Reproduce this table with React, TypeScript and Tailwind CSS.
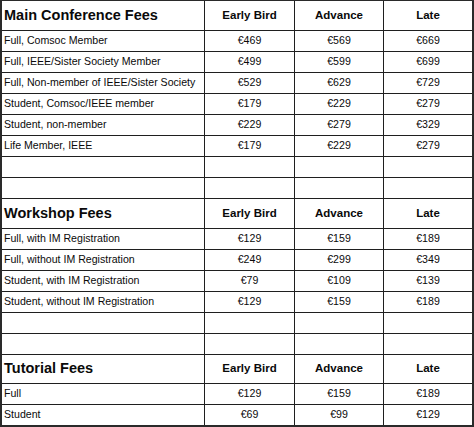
import React from "react";

type Row = [string, string, string, string];

interface Section {
  title: string;
  rows: Row[];
  blanks: number;
  headH: string;
}

const SECTIONS: Section[] = [
  {
    title: "Main Conference Fees",
    headH: "h-[30px]",
    blanks: 2,
    rows: [
      ["Full, Comsoc Member", "€469", "€569", "€669"],
      ["Full, IEEE/Sister Society Member", "€499", "€599", "€699"],
      ["Full, Non-member of IEEE/Sister Society", "€529", "€629", "€729"],
      ["Student, Comsoc/IEEE member", "€179", "€229", "€279"],
      ["Student, non-member", "€229", "€279", "€329"],
      ["Life Member, IEEE", "€179", "€229", "€279"],
    ],
  },
  {
    title: "Workshop Fees",
    headH: "h-[30px]",
    blanks: 2,
    rows: [
      ["Full, with IM Registration", "€129", "€159", "€189"],
      ["Full, without IM Registration", "€249", "€299", "€349"],
      ["Student, with IM Registration", "€79", "€109", "€139"],
      ["Student, without IM Registration", "€129", "€159", "€189"],
    ],
  },
  {
    title: "Tutorial Fees",
    headH: "h-[29px]",
    blanks: 0,
    rows: [
      ["Full", "€129", "€159", "€189"],
      ["Student", "€69", "€99", "€129"],
    ],
  },
];

const COLS = "grid grid-cols-[203px_90px_89px_88px]";
const CELL = "flex items-center border-[#1f1f1f]";

export default function App() {
  return (
    <div
      className="w-[474px] h-[427px] bg-white border-l-2 border-r-2 border-t border-b-2 border-[#2a2a2a] text-[#0a0a0a] overflow-hidden"
      style={{ fontFamily: '"Liberation Sans", Arial, sans-serif' }}
    >
      {SECTIONS.map((sec, si) => {
        const lastSection = si === SECTIONS.length - 1;
        const total = sec.rows.length + sec.blanks;
        return (
          <div key={sec.title}>
            {/* section heading row */}
            <div className={`${COLS} ${sec.headH}`}>
              <div className={`${CELL} border-r border-b pl-[2px] text-[14.5px] font-bold`}>{sec.title}</div>
              {["Early Bird", "Advance", "Late"].map((h, i) => (
                <div
                  key={h}
                  className={`${CELL} justify-center border-b ${i < 2 ? "border-r" : ""} text-[11.5px] font-bold`}
                >
                  {h}
                </div>
              ))}
            </div>
            {Array.from({ length: total }).map((_, ri) => {
              const row: Row = sec.rows[ri] ?? ["", "", "", ""];
              const isLast = lastSection && ri === total - 1;
              const hb = isLast ? "h-[20px]" : "h-[21px] border-b";
              return (
                <div key={ri} className={`${COLS} text-[10.6px]`}>
                  <div className={`${CELL} ${hb} border-r pl-[2px] whitespace-nowrap`}>{row[0]}</div>
                  {row.slice(1).map((v, i) => (
                    <div key={i} className={`${CELL} ${hb} justify-center ${i < 2 ? "border-r" : ""}`}>
                      {v}
                    </div>
                  ))}
                </div>
              );
            })}
          </div>
        );
      })}
    </div>
  );
}
